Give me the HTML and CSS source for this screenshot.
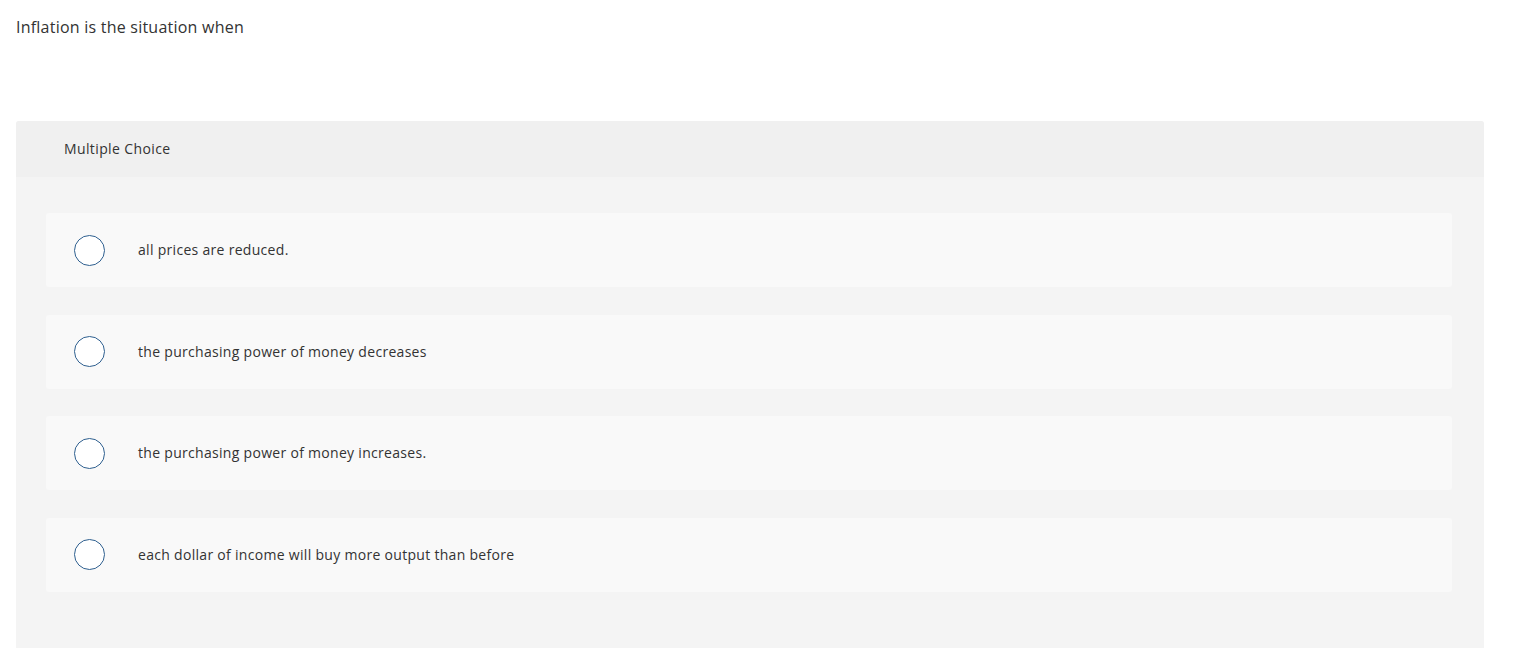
FILE: index.html
```html
<!DOCTYPE html>
<html lang="en">
<head>
    <meta charset="UTF-8">
    <title>Multiple Choice</title>
    <link rel="stylesheet" href="styles.css">
</head>
<body>
    <div class="question">
        <p class="prompt">Inflation is the situation when</p>
    </div>
    <div class="choice-panel">
        <div class="panel-header">Multiple Choice</div>
        <div class="panel-body">
            <label class="choice">
                <span class="radio"></span>
                <span class="choice-text">all prices are reduced.</span>
            </label>
            <label class="choice">
                <span class="radio"></span>
                <span class="choice-text">the purchasing power of money decreases</span>
            </label>
            <label class="choice">
                <span class="radio"></span>
                <span class="choice-text">the purchasing power of money increases.</span>
            </label>
            <label class="choice">
                <span class="radio"></span>
                <span class="choice-text">each dollar of income will buy more output than before</span>
            </label>
        </div>
    </div>
</body>
</html>
```
FILE: styles.css
```css
body {
    font-family: "Open Sans", Arial, sans-serif;
    margin: 0;
    padding: 0;
    background-color: #ffffff;
    color: #333333;
}
.question {
    padding: 17px 16px 0 16px;
    height: 104px;
}
.prompt {
    margin: 0;
    font-size: 16px;
    line-height: 20px;
    letter-spacing: 0.23px;
}
.choice-panel {
    margin: 0 43px 0 16px;
    background-color: #f4f4f4;
    border-radius: 3px 3px 0 0;
    min-height: 527px;
}
.panel-header {
    background-color: #f0f0f0;
    border-radius: 3px 3px 0 0;
    height: 56px;
    line-height: 55px;
    padding-left: 48px;
    font-size: 14px;
    letter-spacing: 0.38px;
}
.panel-body {
    padding: 36px 32px 36px 30px;
    display: flex;
    flex-direction: column;
    gap: 27.5px;
}
.choice {
    display: flex;
    align-items: center;
    height: 74px;
    background-color: #f9f9f9;
    border-radius: 3px;
    padding-left: 28px;
    cursor: pointer;
}
.radio {
    width: 29px;
    height: 29px;
    border: 1.5px solid #2e5f8f;
    border-radius: 50%;
    background-color: #ffffff;
    flex-shrink: 0;
}
.choice-text {
    margin-left: 33px;
    font-size: 14px;
    letter-spacing: 0.3px;
    line-height: 18px;
}
```
